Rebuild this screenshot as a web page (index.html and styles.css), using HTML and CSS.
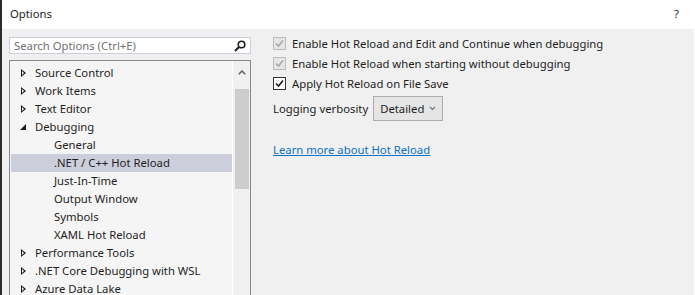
FILE: index.html
```html
<!DOCTYPE html>
<html>
<head>
<meta charset="utf-8">
<link rel="stylesheet" href="styles.css">
</head>
<body>
<div class="window">
  <div class="titlebar">
    <span class="title">Options</span>
    <span class="help">?</span>
  </div>
  <div class="main">
    <div class="left">
      <div class="search">
        <span class="placeholder">Search Options (Ctrl+E)</span>
        <svg class="search-icon" width="12" height="12" viewBox="0 0 12 12">
          <circle cx="7.5" cy="4.5" r="3.3" fill="none" stroke="#1e1e1e" stroke-width="1.6"/>
          <line x1="5.2" y1="6.8" x2="1" y2="11" stroke="#1e1e1e" stroke-width="2"/>
        </svg>
      </div>
      <div class="tree">
        <div class="tree-items">
          <div class="row"><span class="arrow collapsed"></span>Source Control</div>
          <div class="row"><span class="arrow collapsed"></span>Work Items</div>
          <div class="row"><span class="arrow collapsed"></span>Text Editor</div>
          <div class="row"><span class="arrow expanded"></span>Debugging</div>
          <div class="row child">General</div>
          <div class="row child selected">.NET / C++ Hot Reload</div>
          <div class="row child">Just-In-Time</div>
          <div class="row child">Output Window</div>
          <div class="row child">Symbols</div>
          <div class="row child">XAML Hot Reload</div>
          <div class="row"><span class="arrow collapsed"></span>Performance Tools</div>
          <div class="row"><span class="arrow collapsed"></span>.NET Core Debugging with WSL</div>
          <div class="row"><span class="arrow collapsed"></span>Azure Data Lake</div>
        </div>
        <div class="scrollbar">
          <div class="scroll-up">
            <svg width="8" height="5" viewBox="0 0 8 5"><polyline points="0.8,4.2 4,1 7.2,4.2" fill="none" stroke="#606060" stroke-width="1.5"/></svg>
          </div>
          <div class="thumb"></div>
        </div>
      </div>
    </div>
    <div class="right">
      <label class="check disabled"><span class="box"><svg width="11" height="11" viewBox="0 0 11 11"><polyline points="2,5.5 4.5,8 9,2.5" fill="none" stroke="#a8a8a8" stroke-width="1.6"/></svg></span>Enable Hot Reload and Edit and Continue when debugging</label>
      <label class="check disabled"><span class="box"><svg width="11" height="11" viewBox="0 0 11 11"><polyline points="2,5.5 4.5,8 9,2.5" fill="none" stroke="#a8a8a8" stroke-width="1.6"/></svg></span>Enable Hot Reload when starting without debugging</label>
      <label class="check"><span class="box"><svg width="11" height="11" viewBox="0 0 11 11"><polyline points="2,5.5 4.5,8 9,2.5" fill="none" stroke="#1e1e1e" stroke-width="1.6"/></svg></span>Apply Hot Reload on File Save</label>
      <div class="verbosity">
        <span>Logging verbosity</span>
        <div class="dropdown">Detailed
          <svg width="7" height="5" viewBox="0 0 7 5"><polyline points="1,1 3.5,3.5 6,1" fill="none" stroke="#707070" stroke-width="1.1"/></svg>
        </div>
      </div>
      <a class="link" href="#">Learn more about Hot Reload</a>
    </div>
  </div>
</div>
</body>
</html>
```

FILE: styles.css
```css
html, body {
  margin: 0;
  padding: 0;
}
body {
  width: 695px;
  height: 295px;
  overflow: hidden;
  font-family: "Noto Sans", "Open Sans", sans-serif;
  font-size: 11.3px;
  color: #1e1e1e;
  background: #f0f0f0;
}
.window {
  height: 295px;
  border-left: 2px solid #2b2b2b;
  border-right: 1px solid #ffffff;
  background: #f0f0f0;
  display: flex;
  flex-direction: column;
}
.titlebar {
  height: 29px;
  background: #ffffff;
  display: flex;
  align-items: center;
  justify-content: space-between;
  padding: 0 15px 0 8px;
  flex-shrink: 0;
}
.title {
  margin-top: -2px;
}
.help {
  margin-top: -2px;
}
.main {
  display: flex;
  flex: 1;
  min-height: 0;
}
.left {
  width: 242px;
  padding: 8px 0 0 7px;
  display: flex;
  flex-direction: column;
  gap: 6px;
}
.search {
  height: 18px;
  border: 1px solid #cccedb;
  background: #ffffff;
  display: flex;
  align-items: center;
  justify-content: space-between;
  padding: 0 4px 0 4px;
}
.placeholder {
  color: #717171;
}
.search-icon {
  display: block;
}
.tree {
  flex: 1;
  border: 1px solid #828790;
  border-bottom: none;
  background: #f5f5f5;
  display: flex;
}
.tree-items {
  flex: 1;
  padding: 3px 0 0 1px;
}
.row {
  height: 18px;
  line-height: 18px;
  padding-left: 10px;
  display: flex;
  align-items: center;
  white-space: nowrap;
}
.row.child {
  padding-left: 43px;
}
.row.selected {
  background: #cccedb;
}
.arrow {
  position: relative;
}
.arrow.collapsed {
  width: 5px;
  height: 8px;
  margin-right: 9px;
}
.arrow.collapsed::before {
  content: "";
  position: absolute;
  left: 0;
  top: 0;
  width: 0;
  height: 0;
  border-top: 4px solid transparent;
  border-bottom: 4px solid transparent;
  border-left: 5px solid #1e1e1e;
}
.arrow.collapsed::after {
  content: "";
  position: absolute;
  left: 1px;
  top: 2px;
  width: 0;
  height: 0;
  border-top: 2px solid transparent;
  border-bottom: 2px solid transparent;
  border-left: 2.5px solid #f5f5f5;
}
.arrow.expanded {
  width: 6px;
  height: 6px;
  margin-left: -1px;
  margin-right: 9px;
}
.arrow.expanded::before {
  content: "";
  position: absolute;
  left: 0;
  top: 0;
  width: 0;
  height: 0;
  border-left: 6px solid transparent;
  border-bottom: 6px solid #1e1e1e;
}
.scrollbar {
  width: 17px;
  border-left: 1px solid #ffffff;
  background: #f0f0f0;
  display: flex;
  flex-direction: column;
  align-items: center;
}
.scroll-up {
  height: 18px;
  display: flex;
  align-items: center;
  justify-content: center;
  margin-top: 2px;
}
.thumb {
  width: 14px;
  height: 100px;
  margin-top: 8px;
  background: #cdcdcd;
}
.right {
  flex: 1;
  padding: 4px 0 0 22px;
  display: flex;
  flex-direction: column;
  align-items: flex-start;
}
.check {
  height: 20px;
  display: flex;
  align-items: center;
  white-space: nowrap;
}
.box {
  width: 11px;
  height: 11px;
  border: 1px solid #333333;
  background: #ffffff;
  margin-right: 6px;
  display: flex;
  align-items: center;
  justify-content: center;
}
.check.disabled .box {
  border-color: #bcbcbc;
  background: #e6e6e6;
}
.verbosity {
  margin-top: 3px;
  display: flex;
  align-items: center;
  gap: 5px;
}
.dropdown {
  width: 56px;
  height: 23px;
  border: 1px solid #acacac;
  background: #e5e5e5;
  display: flex;
  align-items: center;
  justify-content: space-between;
  padding: 0 6px 0 6px;
}
.link {
  margin-top: 21px;
  color: #0e70c0;
  text-decoration: underline;
}
```
